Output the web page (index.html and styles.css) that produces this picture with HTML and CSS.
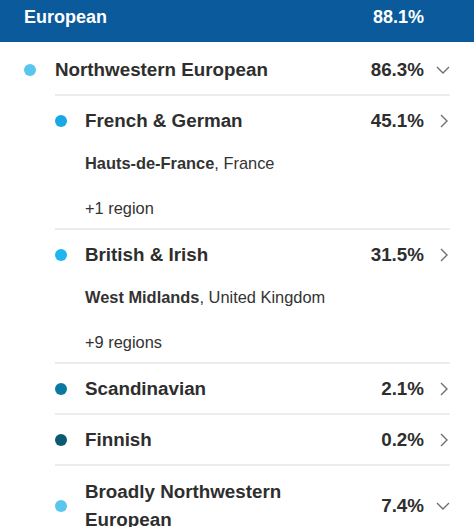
FILE: index.html
```html
<!DOCTYPE html>
<html>
<head>
<meta charset="utf-8">
<link rel="stylesheet" href="styles.css">
</head>
<body>
<div class="page">
  <div class="header">
    <span class="h-name">European</span>
    <span class="h-pct">88.1%</span>
  </div>

  <div class="row top">
    <span class="dot" style="background:#5ac6ee"></span>
    <span class="name">Northwestern European</span>
    <span class="pct">86.3%</span>
    <svg class="chev down" viewBox="0 0 14 8"><path d="M1 1 L7 7 L13 1"/></svg>
  </div>

  <div class="group">
    <div class="item">
      <div class="row sub">
        <span class="dot" style="background:#1aa7e6"></span>
        <span class="name">French &amp; German</span>
        <span class="pct">45.1%</span>
        <svg class="chev right" viewBox="0 0 8 14"><path d="M1 1 L7 7 L1 13"/></svg>
      </div>
      <div class="detail first"><b>Hauts-de-France</b>, France</div>
      <div class="detail more">+1 region</div>
    </div>

    <div class="item">
      <div class="row sub">
        <span class="dot" style="background:#1fb6ef"></span>
        <span class="name">British &amp; Irish</span>
        <span class="pct">31.5%</span>
        <svg class="chev right" viewBox="0 0 8 14"><path d="M1 1 L7 7 L1 13"/></svg>
      </div>
      <div class="detail first"><b>West Midlands</b>, United Kingdom</div>
      <div class="detail more">+9 regions</div>
    </div>

    <div class="item">
      <div class="row sub">
        <span class="dot" style="background:#0b78a0"></span>
        <span class="name">Scandinavian</span>
        <span class="pct">2.1%</span>
        <svg class="chev right" viewBox="0 0 8 14"><path d="M1 1 L7 7 L1 13"/></svg>
      </div>
    </div>

    <div class="item">
      <div class="row sub">
        <span class="dot" style="background:#0b5a72"></span>
        <span class="name">Finnish</span>
        <span class="pct">0.2%</span>
        <svg class="chev right" viewBox="0 0 8 14"><path d="M1 1 L7 7 L1 13"/></svg>
      </div>
    </div>

    <div class="item last">
      <div class="row sub tall">
        <span class="dot" style="background:#5ac6ee"></span>
        <span class="name">Broadly Northwestern<br>European</span>
        <span class="pct">7.4%</span>
        <svg class="chev down" viewBox="0 0 14 8"><path d="M1 1 L7 7 L13 1"/></svg>
      </div>
    </div>
  </div>
</div>
</body>
</html>
```

FILE: styles.css
```css
* { box-sizing: border-box; }
html, body { margin: 0; padding: 0; background: #fff; }
body {
  font-family: "Liberation Sans", Arial, sans-serif;
  color: #2e2e2e;
  width: 474px;
  height: 527px;
  overflow: hidden;
}
.page { width: 474px; }

.header {
  height: 42px;
  background: #0b5a9b;
  color: #fff;
  display: flex;
  align-items: flex-start;
  justify-content: space-between;
  padding: 6px 50px 0 24px;
  font-weight: bold;
  font-size: 18px;
  line-height: 22px;
}

.row {
  display: flex;
  align-items: center;
  font-weight: bold;
  font-size: 18.8px;
  line-height: 22px;
}
.row .name { flex: 1; }
.row .pct { margin-right: 12px; }
.dot {
  width: 12px;
  height: 12px;
  border-radius: 50%;
  flex: none;
}
.row.top {
  padding: 17px 24px 13px 24px;
}
.row.top .dot { margin-right: 19px; }

.group {
  margin: 0 24px 0 55px;
  border-top: 2px solid #ececec;
}
.item {
  border-bottom: 2px solid #ececec;
}
.item.last { border-bottom: none; }
.row.sub {
  padding: 14px 0 13px 0;
}
.row.sub .dot { margin-right: 18px; }
.row.tall { padding-top: 12px; }
.row.tall .name { line-height: 28px; }

.detail {
  padding-left: 30px;
  font-size: 16.4px;
  line-height: 22px;
  color: #333;
}
.detail.first { margin-top: 7px; }
.detail.more { margin-top: 23px; margin-bottom: 9px; }

.chev {
  fill: none;
  stroke: #6f6f6f;
  stroke-width: 1.4;
  flex: none;
}
.chev.down { width: 14px; height: 8px; }
.chev.right { width: 8px; height: 14px; margin-right: 2px; margin-left: 4px; }
```
